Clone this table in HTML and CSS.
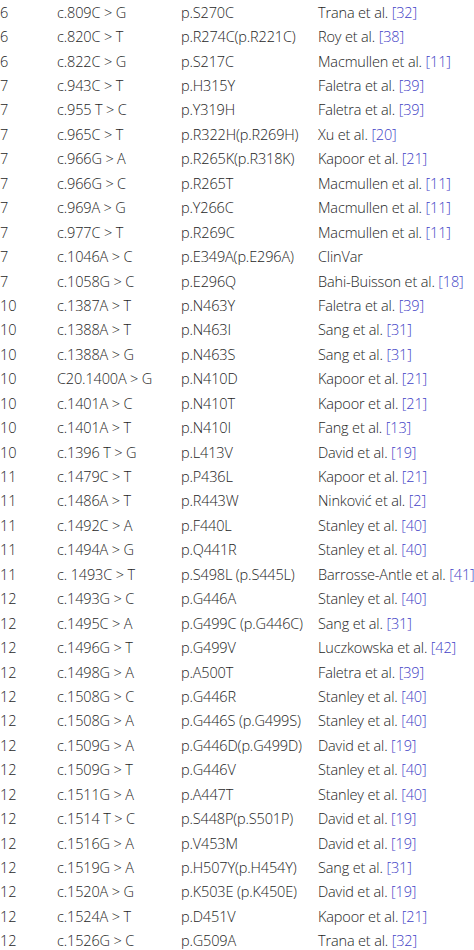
FILE: index.html
```html
<!DOCTYPE html>
<html>
<head>
<meta charset="utf-8">
<link rel="stylesheet" href="styles.css">
</head>
<body>
<div class="tbl">
<div class="row"><span class="c1">6</span><span class="c2">c.809C &gt; G</span><span class="c3">p.S270C</span><span class="c4">Trana et al. <a>[32]</a></span></div>
<div class="row"><span class="c1">6</span><span class="c2">c.820C &gt; T</span><span class="c3">p.R274C(p.R221C)</span><span class="c4">Roy et al. <a>[38]</a></span></div>
<div class="row"><span class="c1">6</span><span class="c2">c.822C &gt; G</span><span class="c3">p.S217C</span><span class="c4">Macmullen et al. <a>[11]</a></span></div>
<div class="row"><span class="c1">7</span><span class="c2">c.943C &gt; T</span><span class="c3">p.H315Y</span><span class="c4">Faletra et al. <a>[39]</a></span></div>
<div class="row"><span class="c1">7</span><span class="c2">c.955 T &gt; C</span><span class="c3">p.Y319H</span><span class="c4">Faletra et al. <a>[39]</a></span></div>
<div class="row"><span class="c1">7</span><span class="c2">c.965C &gt; T</span><span class="c3">p.R322H(p.R269H)</span><span class="c4">Xu et al. <a>[20]</a></span></div>
<div class="row"><span class="c1">7</span><span class="c2">c.966G &gt; A</span><span class="c3">p.R265K(p.R318K)</span><span class="c4">Kapoor et al. <a>[21]</a></span></div>
<div class="row"><span class="c1">7</span><span class="c2">c.966G &gt; C</span><span class="c3">p.R265T</span><span class="c4">Macmullen et al. <a>[11]</a></span></div>
<div class="row"><span class="c1">7</span><span class="c2">c.969A &gt; G</span><span class="c3">p.Y266C</span><span class="c4">Macmullen et al. <a>[11]</a></span></div>
<div class="row"><span class="c1">7</span><span class="c2">c.977C &gt; T</span><span class="c3">p.R269C</span><span class="c4">Macmullen et al. <a>[11]</a></span></div>
<div class="row"><span class="c1">7</span><span class="c2">c.1046A &gt; C</span><span class="c3">p.E349A(p.E296A)</span><span class="c4">ClinVar</span></div>
<div class="row"><span class="c1">7</span><span class="c2">c.1058G &gt; C</span><span class="c3">p.E296Q</span><span class="c4">Bahi-Buisson et al. <a>[18]</a></span></div>
<div class="row"><span class="c1">10</span><span class="c2">c.1387A &gt; T</span><span class="c3">p.N463Y</span><span class="c4">Faletra et al. <a>[39]</a></span></div>
<div class="row"><span class="c1">10</span><span class="c2">c.1388A &gt; T</span><span class="c3">p.N463I</span><span class="c4">Sang et al. <a>[31]</a></span></div>
<div class="row"><span class="c1">10</span><span class="c2">c.1388A &gt; G</span><span class="c3">p.N463S</span><span class="c4">Sang et al. <a>[31]</a></span></div>
<div class="row"><span class="c1">10</span><span class="c2">C20.1400A &gt; G</span><span class="c3">p.N410D</span><span class="c4">Kapoor et al. <a>[21]</a></span></div>
<div class="row"><span class="c1">10</span><span class="c2">c.1401A &gt; C</span><span class="c3">p.N410T</span><span class="c4">Kapoor et al. <a>[21]</a></span></div>
<div class="row"><span class="c1">10</span><span class="c2">c.1401A &gt; T</span><span class="c3">p.N410I</span><span class="c4">Fang et al. <a>[13]</a></span></div>
<div class="row"><span class="c1">10</span><span class="c2">c.1396 T &gt; G</span><span class="c3">p.L413V</span><span class="c4">David et al. <a>[19]</a></span></div>
<div class="row"><span class="c1">11</span><span class="c2">c.1479C &gt; T</span><span class="c3">p.P436L</span><span class="c4">Kapoor et al. <a>[21]</a></span></div>
<div class="row"><span class="c1">11</span><span class="c2">c.1486A &gt; T</span><span class="c3">p.R443W</span><span class="c4">Ninković et al. <a>[2]</a></span></div>
<div class="row"><span class="c1">11</span><span class="c2">c.1492C &gt; A</span><span class="c3">p.F440L</span><span class="c4">Stanley et al. <a>[40]</a></span></div>
<div class="row"><span class="c1">11</span><span class="c2">c.1494A &gt; G</span><span class="c3">p.Q441R</span><span class="c4">Stanley et al. <a>[40]</a></span></div>
<div class="row"><span class="c1">11</span><span class="c2">c. 1493C &gt; T</span><span class="c3">p.S498L (p.S445L)</span><span class="c4">Barrosse-Antle et al. <a>[41]</a></span></div>
<div class="row"><span class="c1">12</span><span class="c2">c.1493G &gt; C</span><span class="c3">p.G446A</span><span class="c4">Stanley et al. <a>[40]</a></span></div>
<div class="row"><span class="c1">12</span><span class="c2">c.1495C &gt; A</span><span class="c3">p.G499C (p.G446C)</span><span class="c4">Sang et al. <a>[31]</a></span></div>
<div class="row"><span class="c1">12</span><span class="c2">c.1496G &gt; T</span><span class="c3">p.G499V</span><span class="c4">Luczkowska et al. <a>[42]</a></span></div>
<div class="row"><span class="c1">12</span><span class="c2">c.1498G &gt; A</span><span class="c3">p.A500T</span><span class="c4">Faletra et al. <a>[39]</a></span></div>
<div class="row"><span class="c1">12</span><span class="c2">c.1508G &gt; C</span><span class="c3">p.G446R</span><span class="c4">Stanley et al. <a>[40]</a></span></div>
<div class="row"><span class="c1">12</span><span class="c2">c.1508G &gt; A</span><span class="c3">p.G446S (p.G499S)</span><span class="c4">Stanley et al. <a>[40]</a></span></div>
<div class="row"><span class="c1">12</span><span class="c2">c.1509G &gt; A</span><span class="c3">p.G446D(p.G499D)</span><span class="c4">David et al. <a>[19]</a></span></div>
<div class="row"><span class="c1">12</span><span class="c2">c.1509G &gt; T</span><span class="c3">p.G446V</span><span class="c4">Stanley et al. <a>[40]</a></span></div>
<div class="row"><span class="c1">12</span><span class="c2">c.1511G &gt; A</span><span class="c3">p.A447T</span><span class="c4">Stanley et al. <a>[40]</a></span></div>
<div class="row"><span class="c1">12</span><span class="c2">c.1514 T &gt; C</span><span class="c3">p.S448P(p.S501P)</span><span class="c4">David et al. <a>[19]</a></span></div>
<div class="row"><span class="c1">12</span><span class="c2">c.1516G &gt; A</span><span class="c3">p.V453M</span><span class="c4">David et al. <a>[19]</a></span></div>
<div class="row"><span class="c1">12</span><span class="c2">c.1519G &gt; A</span><span class="c3">p.H507Y(p.H454Y)</span><span class="c4">Sang et al. <a>[31]</a></span></div>
<div class="row"><span class="c1">12</span><span class="c2">c.1520A &gt; G</span><span class="c3">p.K503E (p.K450E)</span><span class="c4">David et al. <a>[19]</a></span></div>
<div class="row"><span class="c1">12</span><span class="c2">c.1524A &gt; T</span><span class="c3">p.D451V</span><span class="c4">Kapoor et al. <a>[21]</a></span></div>
<div class="row"><span class="c1">12</span><span class="c2">c.1526G &gt; C</span><span class="c3">p.G509A</span><span class="c4">Trana et al. <a>[32]</a></span></div>
</div>
</body>
</html>
```
FILE: styles.css
```css
html, body {
  margin: 0;
  padding: 0;
  background: #ffffff;
}
body {
  font-family: "Open Sans", "Noto Sans", sans-serif;
  font-weight: 300;
  font-size: 14.5px;
  color: #1e1e1e;
  overflow: hidden;
}
.tbl {
  display: flex;
  flex-direction: column;
}
.row {
  display: grid;
  grid-template-columns: 57px 124px 137px 1fr;
  height: 24.45px;
  align-items: center;
  white-space: nowrap;
  letter-spacing: -0.15px;
}
.c4 a {
  color: #4242c6;
}
```
